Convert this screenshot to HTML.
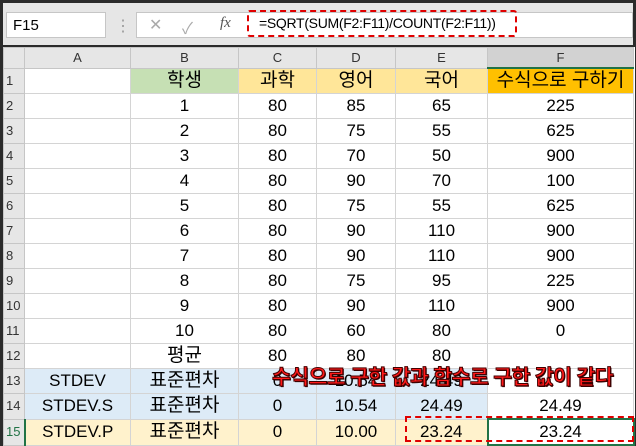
<!DOCTYPE html>
<html><head><meta charset="utf-8"><style>
body{margin:0;width:636px;height:445px;overflow:hidden;background:#2b2b2b;font-family:"Liberation Sans","Noto Sans CJK KR",sans-serif;position:relative}
#fb{position:absolute;left:3px;top:3px;width:630px;height:42px;background:#e6e6e6}
.nb{position:absolute;left:3px;top:9px;width:100px;height:26px;background:#fff;border:1px solid #c6c6c6;font-size:15px;line-height:26px;padding-left:6px;box-sizing:border-box}
.fx{position:absolute;left:133px;top:9px;width:497px;height:26px;background:#fff;border:1px solid #c6c6c6;box-sizing:border-box}
.frm{position:absolute;left:247px;top:10px;width:270px;height:27px;border:2px dashed #e00000;border-radius:3px;box-sizing:border-box;font-size:14px;letter-spacing:-0.3px;line-height:23px;padding-left:10px;color:#000;white-space:nowrap}
table{position:absolute;left:3px;top:47px;border-collapse:collapse;table-layout:fixed;background:#fff}
td{border:1px solid #d4d4d4;padding:0;text-align:center;font-size:17px;height:24px;line-height:22px;white-space:nowrap;overflow:hidden}
td.h{background:#e6e6e6;color:#333;font-size:13px;border-color:#c6c6c6}
tr.hd td{height:19px;line-height:17px}
td.rn{text-align:left;padding-left:2px;font-size:13px;background:#e6e6e6;color:#333;border-color:#c6c6c6}
.k{font-size:19px;line-height:24px}
.g{background:#c6e0b4}.y{background:#ffe699}.o{background:#ffc000}.b{background:#ddebf7}.p{background:#fff2cc}
.ov{position:absolute;left:272px;top:365px;font-size:20.5px;line-height:26px;font-weight:bold;color:#ff1a1a;-webkit-text-stroke:1px #400;letter-spacing:-0.6px;text-shadow:1px 1px 0 #300;white-space:nowrap}
.rb{position:absolute;border:2px dashed #e00000;box-sizing:border-box}
</style></head><body>
<div id="fb"><div class="nb">F15</div><span style="position:absolute;left:112px;top:13px;color:#999">⋮</span>
<div class="fx"><span style="position:absolute;left:12px;top:2px;color:#aaa;font-size:16px">✕</span><span style="position:absolute;left:45px;top:2px;color:#aaa;font-size:16px">✓</span><span style="position:absolute;left:83px;top:2px;font-style:italic;font-family:'Liberation Serif';color:#555;font-size:15px">fx</span></div></div>
<div class="frm">=SQRT(SUM(F2:F11)/COUNT(F2:F11))</div>
<table>
<colgroup><col style="width:21px"><col style="width:106px"><col style="width:108px"><col style="width:78px"><col style="width:79px"><col style="width:92px"><col style="width:146px"></colgroup>
<tr class="hd"><td class="h"></td><td class="h">A</td><td class="h">B</td><td class="h">C</td><td class="h">D</td><td class="h">E</td><td class="h" style="border-bottom:2px solid #217346;background:#d2d2d2">F</td></tr>
<tr><td class="rn">1</td><td></td><td class="g k">학생</td><td class="y k">과학</td><td class="y k">영어</td><td class="y k">국어</td><td class="o k">수식으로 구하기</td></tr>
<tr><td class="rn">2</td><td></td><td>1</td><td>80</td><td>85</td><td>65</td><td>225</td></tr>
<tr><td class="rn">3</td><td></td><td>2</td><td>80</td><td>75</td><td>55</td><td>625</td></tr>
<tr><td class="rn">4</td><td></td><td>3</td><td>80</td><td>70</td><td>50</td><td>900</td></tr>
<tr><td class="rn">5</td><td></td><td>4</td><td>80</td><td>90</td><td>70</td><td>100</td></tr>
<tr><td class="rn">6</td><td></td><td>5</td><td>80</td><td>75</td><td>55</td><td>625</td></tr>
<tr><td class="rn">7</td><td></td><td>6</td><td>80</td><td>90</td><td>110</td><td>900</td></tr>
<tr><td class="rn">8</td><td></td><td>7</td><td>80</td><td>90</td><td>110</td><td>900</td></tr>
<tr><td class="rn">9</td><td></td><td>8</td><td>80</td><td>75</td><td>95</td><td>225</td></tr>
<tr><td class="rn">10</td><td></td><td>9</td><td>80</td><td>90</td><td>110</td><td>900</td></tr>
<tr><td class="rn">11</td><td></td><td>10</td><td>80</td><td>60</td><td>80</td><td>0</td></tr>
<tr><td class="rn">12</td><td></td><td class="k" style="border-top:1px solid #000">평균</td><td style="border-top:1px solid #000">80</td><td style="border-top:1px solid #000">80</td><td style="border-top:1px solid #000">80</td><td></td></tr>
<tr><td class="rn">13</td><td class="b" style="border-top:1px solid #000">STDEV</td><td class="b k" style="border-top:1px solid #000">표준편차</td><td class="b" style="border-top:1px solid #000">0</td><td class="b" style="border-top:1px solid #000">10.54</td><td class="b" style="border-top:1px solid #000">24.49</td><td></td></tr>
<tr><td class="rn">14</td><td class="b">STDEV.S</td><td class="b k">표준편차</td><td class="b">0</td><td class="b">10.54</td><td class="b">24.49</td><td>24.49</td></tr>
<tr><td class="rn" style="color:#217346;border-right:2px solid #217346">15</td><td class="p" style="border-top:1px solid #000">STDEV.P</td><td class="p k" style="border-top:1px solid #000">표준편차</td><td class="p" style="border-top:1px solid #000">0</td><td class="p" style="border-top:1px solid #000">10.00</td><td class="p" style="border-top:1px solid #000">23.24</td><td style="border:2px solid #217346">23.24</td></tr>
</table>
<div class="ov">수식으로 구한 값과 함수로 구한 값이 같다</div>
<div class="rb" style="left:405px;top:416px;width:229px;height:26px"></div>
</body></html>
